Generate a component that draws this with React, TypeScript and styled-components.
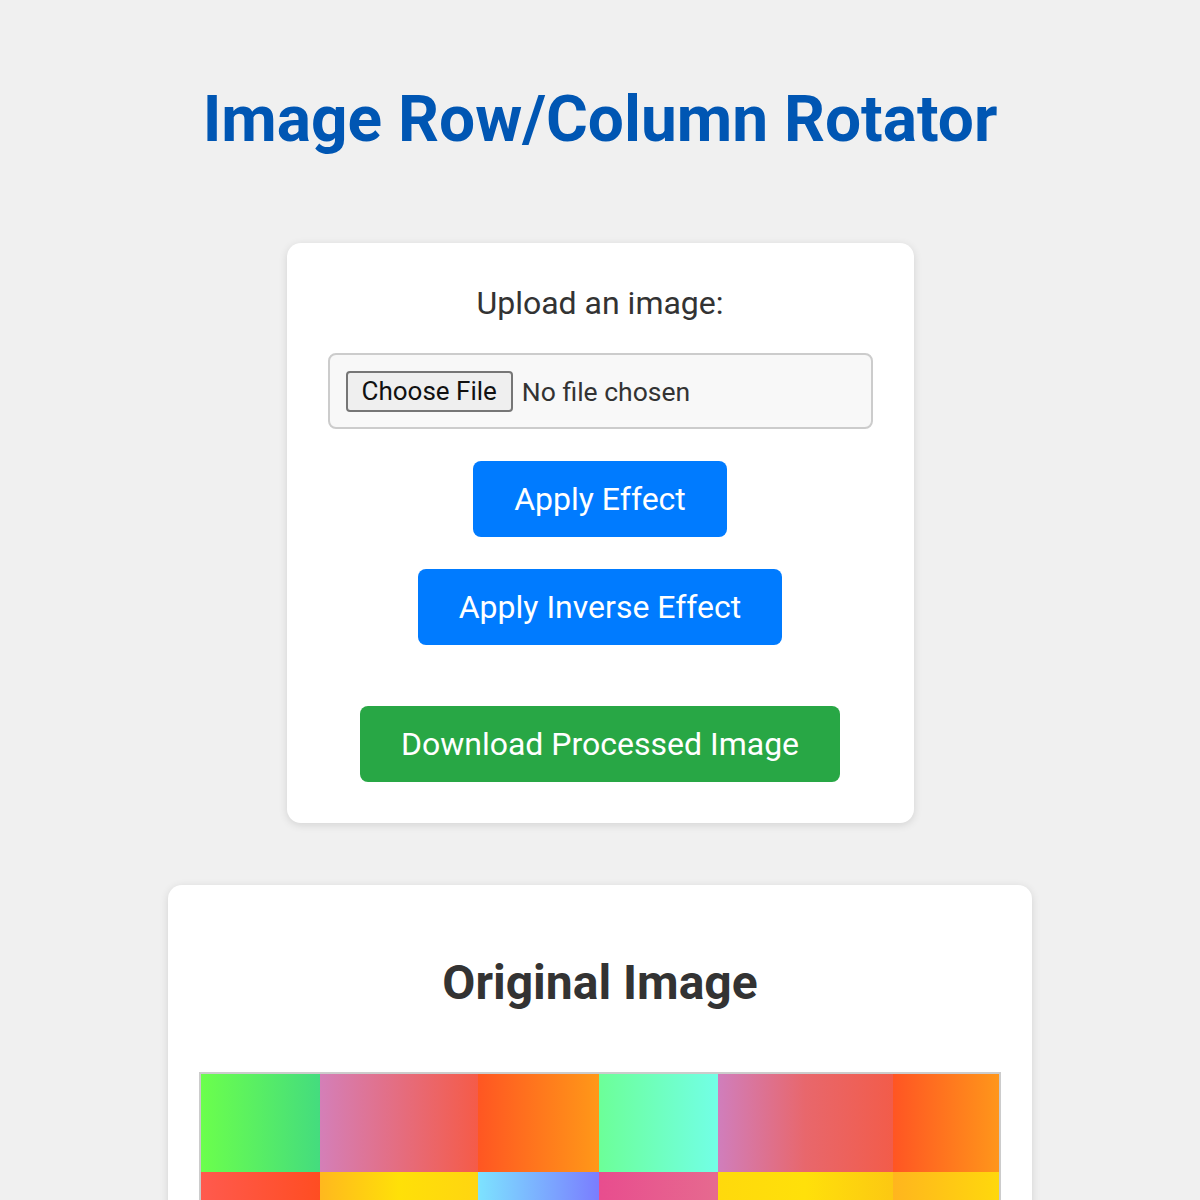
import styled, { createGlobalStyle } from "styled-components";

const GlobalStyle = createGlobalStyle`
  body {
    margin: 0;
    background: #f0f0f0;
    font-family: Roboto, "Liberation Sans", Arial, sans-serif;
    color: #333;
  }
`;

const Page = styled.div`
  display: flex;
  flex-direction: column;
  align-items: center;
  padding: 80px 20px 40px;
`;

const Title = styled.h1`
  margin: 0 0 83px;
  font-size: 64px;
  font-weight: 700;
  color: #0056b3;
  line-height: 80px;
`;

const Card = styled.div<{ $width: number; $pad: number }>`
  box-sizing: border-box;
  width: ${(p) => p.$width}px;
  padding: ${(p) => p.$pad}px;
  background: #fff;
  border-radius: 14px;
  box-shadow: 0 2px 8px rgba(0, 0, 0, 0.12);
  display: flex;
  flex-direction: column;
  align-items: center;
`;

const UploadCard = styled(Card)`
  padding-top: 42px;
  margin-bottom: 62px;
`;

const Label = styled.label`
  font-size: 32px;
  line-height: 36px;
  color: #333;
  margin-bottom: 32px;
`;

const FileBox = styled.div`
  box-sizing: border-box;
  align-self: stretch;
  height: 76px;
  display: flex;
  align-items: center;
  gap: 9px;
  padding: 0 16px;
  background: #f8f8f8;
  border: 2px solid #ccc;
  border-radius: 8px;
`;

const ChooseButton = styled.span`
  box-sizing: border-box;
  height: 41px;
  padding: 0 14px;
  display: flex;
  align-items: center;
  font-size: 26px;
  color: #111;
  background: #efefef;
  border: 2px solid #767676;
  border-radius: 4px;
`;

const FileStatus = styled.span`
  font-size: 26.5px;
  color: #333;
`;

const ActionButton = styled.button<{ $color: string; $top: number }>`
  box-sizing: border-box;
  height: 76px;
  margin-top: ${(p) => p.$top}px;
  padding: 0 41px;
  border: none;
  border-radius: 8px;
  background: ${(p) => p.$color};
  color: #fff;
  font-family: inherit;
  font-size: 32px;
  cursor: pointer;
`;

const PreviewCard = styled(Card)`
  padding-top: 70px;
`;

const PreviewTitle = styled.h2`
  margin: 0 0 61px;
  font-size: 48px;
  line-height: 56px;
  font-weight: 700;
  color: #333;
`;

const Frame = styled.div`
  align-self: stretch;
  border: 2px solid #ccc;
  line-height: 0;
`;

const colWidths = [119, 158, 121, 119, 175, 106];
const rowHeight = 98;

const tiles: string[][][] = [
  [
    ["#6bff4c", "#44dc7e"],
    ["#d47fb8", "#f55b48"],
    ["#ff5622", "#ff9818"],
    ["#6cff98", "#72ffe6"],
    ["#d07ebc", "#e8676c", "#f25c4a"],
    ["#ff5523", "#ff961a"],
  ],
  [
    ["#ff5a4e", "#ff4d22"],
    ["#ffb81e", "#ffe008", "#ffd510"],
    ["#7de3ff", "#7a7dff"],
    ["#e84d8e", "#e66a8f"],
    ["#ffd90c", "#ffe00a", "#fcc812"],
    ["#ffb51e", "#ffd80c"],
  ],
  [
    ["#8a7dff", "#c77fd0"],
    ["#6cff4c", "#4be58a"],
    ["#ff9818", "#ffc81a"],
    ["#d47fb8", "#f55b48"],
    ["#72ffe6", "#7de3ff"],
    ["#ff4d22", "#ff5a4e"],
  ],
];

const Mosaic = () => {
  const width = colWidths.reduce((a, b) => a + b, 0);
  const height = rowHeight * tiles.length;
  const defs: JSX.Element[] = [];
  const rects: JSX.Element[] = [];
  tiles.forEach((row, r) => {
    let x = 0;
    row.forEach((stops, c) => {
      const id = `g${r}-${c}`;
      defs.push(
        <linearGradient key={id} id={id} x1="0" y1="0" x2="1" y2="0">
          {stops.map((s, i) => (
            <stop key={i} offset={i / (stops.length - 1)} stopColor={s} />
          ))}
        </linearGradient>
      );
      rects.push(
        <rect
          key={id}
          x={x}
          y={r * rowHeight}
          width={colWidths[c]}
          height={rowHeight}
          fill={`url(#${id})`}
        />
      );
      x += colWidths[c];
    });
  });
  return (
    <svg width="100%" viewBox={`0 0 ${width} ${height}`} preserveAspectRatio="none">
      <defs>{defs}</defs>
      {rects}
    </svg>
  );
};

const App = () => {
  return (
    <>
      <GlobalStyle />
      <Page>
        <Title>Image Row/Column Rotator</Title>
        <UploadCard $width={627} $pad={41}>
          <Label>Upload an image:</Label>
          <FileBox>
            <ChooseButton>Choose File</ChooseButton>
            <FileStatus>No file chosen</FileStatus>
          </FileBox>
          <ActionButton $color="#007bff" $top={32}>
            Apply Effect
          </ActionButton>
          <ActionButton $color="#007bff" $top={32}>
            Apply Inverse Effect
          </ActionButton>
          <ActionButton $color="#28a745" $top={61}>
            Download Processed Image
          </ActionButton>
        </UploadCard>
        <PreviewCard $width={864} $pad={31}>
          <PreviewTitle>Original Image</PreviewTitle>
          <Frame>
            <Mosaic />
          </Frame>
        </PreviewCard>
      </Page>
    </>
  );
};

export default App;
